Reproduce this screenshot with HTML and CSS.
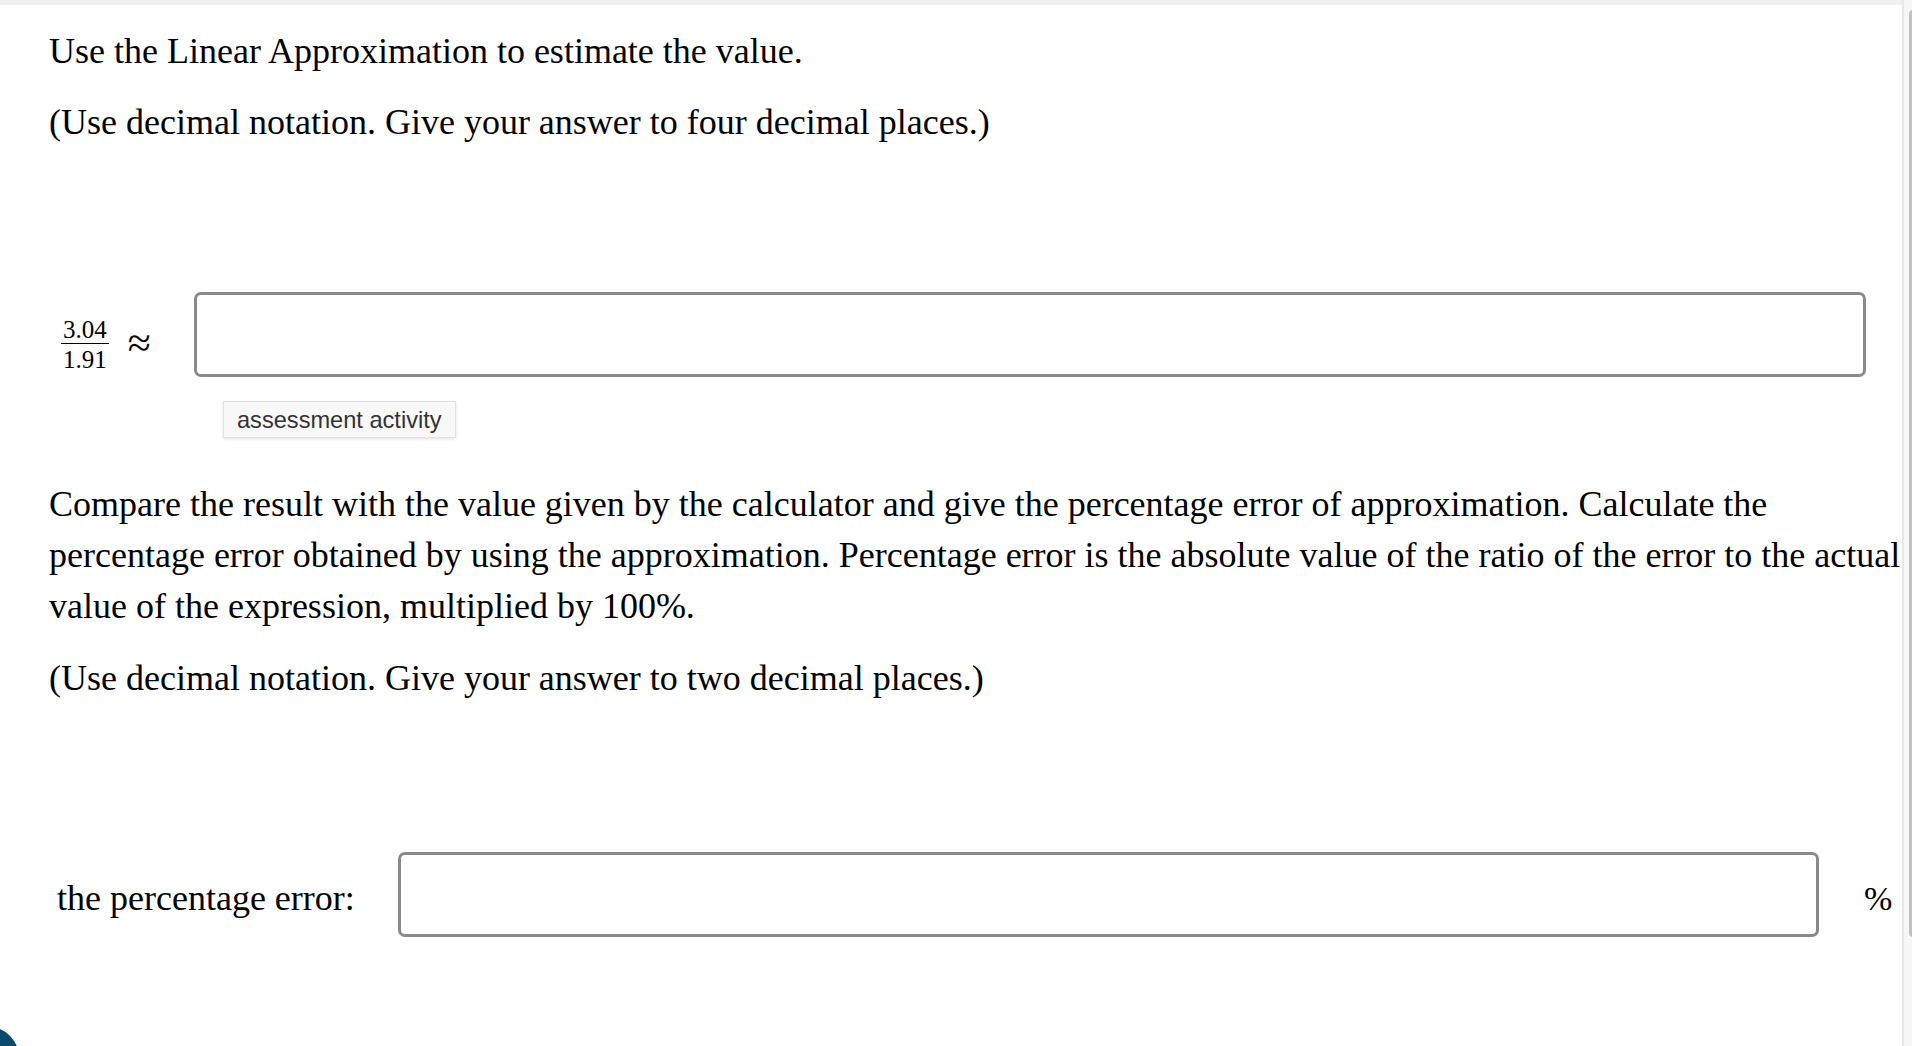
FILE: index.html
```html
<!DOCTYPE html>
<html lang="en">
<head>
<meta charset="utf-8">
<title>Linear Approximation</title>
<link rel="stylesheet" href="styles.css">
</head>
<body>
<div class="app">
  <div class="main">
    <div class="topbar"></div>
    <div class="content">
      <p class="para para--first">Use the Linear Approximation to estimate the value.</p>
      <p class="para">(Use decimal notation. Give your answer to four decimal places.)</p>

      <div class="answer-row answer-row--approx">
        <div class="math">
          <span class="frac">
            <span class="frac-num">3.04</span>
            <span class="frac-den">1.91</span>
          </span>
          <span class="approx">≈</span>
        </div>
        <input class="answer-field answer-field--wide" type="text" aria-label="approximation">
      </div>
      <div class="hint">assessment activity</div>

      <p class="para para--compare">Compare the result with the value given by the calculator and give the percentage error of approximation. Calculate the percentage error obtained by using the approximation. Percentage error is the absolute value of the ratio of the error to the actual value of the expression, multiplied by 100%.</p>
      <p class="para para--note">(Use decimal notation. Give your answer to two decimal places.)</p>

      <div class="answer-row answer-row--pct">
        <span class="row-label">the percentage error:</span>
        <input class="answer-field answer-field--pct" type="text" aria-label="percentage error">
        <span class="unit">%</span>
      </div>
    </div>
  </div>
  <div class="scrollbar"><div class="scrollbar-thumb"></div></div>
</div>
<div class="fab"></div>
</body>
</html>
```
FILE: styles.css
```css
html, body {
  margin: 0;
  padding: 0;
  overflow: hidden;
  background: #ffffff;
}

body {
  font-family: "Liberation Serif", "Times New Roman", Times, serif;
  color: #000;
}

.app {
  display: flex;
  width: 1912px;
  height: 1046px;
  overflow: hidden;
}

.main {
  flex: none;
  width: 1902px;
  height: 100%;
  background: #ffffff;
}

.topbar {
  height: 5px;
  background: #f0f0f0;
}

.content {
  width: 1866px;
  padding: 20.5px 0 0 49px;
}

.para {
  margin: 21px 0 0 0;
  font-size: 36px;
  line-height: 50.6px;
}

.para--first {
  margin-top: 0;
}

.para--compare {
  margin-top: 41.5px;
}

.para--note {
  margin-top: 21.5px;
}

.answer-row {
  display: flex;
  align-items: flex-start;
}

.answer-row--approx {
  margin-top: 144.3px;
}

.math {
  flex: none;
  width: 133px;
  padding-left: 12px;
  margin-top: 24.6px;
  display: flex;
  align-items: center;
}

.frac {
  display: flex;
  flex-direction: column;
  align-items: stretch;
  font-size: 25px;
  line-height: 25px;
  text-align: center;
}

.frac-num {
  padding: 0 2px 1.5px;
  border-bottom: 1.6px solid #000;
}

.frac-den {
  padding: 2.5px 2px 0;
}

.approx {
  font-size: 42px;
  line-height: 42px;
  margin-left: 19px;
  margin-bottom: 2px;
}

.answer-field {
  display: block;
  box-sizing: border-box;
  height: 85px;
  margin: 0;
  padding: 0 12px;
  border: 3px solid #8a8a8a;
  border-radius: 7px;
  background: #fff;
  outline: none;
  font: inherit;
}

.answer-field--wide {
  width: 1672px;
}

.hint {
  width: max-content;
  margin: 24px 0 0 174px;
  padding: 0 13px;
  height: 35px;
  line-height: 36px;
  border: 1px solid #e1e1e1;
  background: #f8f8f8;
  box-shadow: 0 1px 3px rgba(0, 0, 0, 0.12);
  font-family: "Liberation Sans", Arial, Helvetica, sans-serif;
  font-size: 23.6px;
  color: #333;
}

.answer-row--pct {
  margin-top: 148.6px;
  padding-left: 8px;
}

.row-label {
  flex: none;
  width: 341px;
  margin-top: 21.5px;
  font-size: 36px;
  line-height: 50.6px;
}

.answer-field--pct {
  width: 1421px;
}

.unit {
  margin: 22.5px 0 0 45px;
  font-size: 34px;
  line-height: 50.6px;
}

.scrollbar {
  position: relative;
  flex: none;
  width: 8px;
  height: 100%;
  border-left: 2px solid #e7e7e7;
  background: #f7f7f7;
}

.scrollbar-thumb {
  position: absolute;
  left: 5px;
  top: 10px;
  width: 8px;
  height: 927px;
  border-radius: 4px;
  background: #c2c2c2;
}

.fab {
  position: fixed;
  left: -48px;
  bottom: -48px;
  width: 68px;
  height: 68px;
  border-radius: 50%;
  background: #0b4a6b;
}
```
